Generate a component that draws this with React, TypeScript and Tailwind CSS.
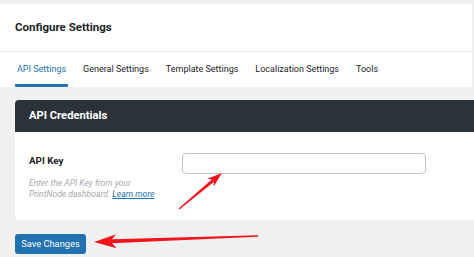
type Pt = [number, number];

// Builds a tapered arrow polygon from tail to tip
function arrowPoints(tail: Pt, tip: Pt, headLen: number, headHalf: number, shaftHalf: number, tailHalf: number) {
  const dx = tip[0] - tail[0];
  const dy = tip[1] - tail[1];
  const len = Math.hypot(dx, dy);
  const ux = dx / len;
  const uy = dy / len;
  const nx = -uy;
  const ny = ux;
  const bx = tip[0] - ux * headLen;
  const by = tip[1] - uy * headLen;
  const wx = bx - ux * headLen * 0.25;
  const wy = by - uy * headLen * 0.25;
  const pts: Pt[] = [
    [tail[0] + nx * tailHalf, tail[1] + ny * tailHalf],
    [bx + nx * shaftHalf, by + ny * shaftHalf],
    [wx + nx * headHalf, wy + ny * headHalf],
    tip,
    [wx - nx * headHalf, wy - ny * headHalf],
    [bx - nx * shaftHalf, by - ny * shaftHalf],
    [tail[0] - nx * tailHalf, tail[1] - ny * tailHalf],
  ];
  return pts.map((p) => `${p[0].toFixed(1)},${p[1].toFixed(1)}`).join(" ");
}

const tabs = ["API Settings", "General Settings", "Template Settings", "Localization Settings", "Tools"];

export default function App() {
  return (
    <div className="relative w-[474px] h-[257px] overflow-hidden bg-[#f0f0f1] pt-[4px] font-['Roboto',sans-serif] text-[#1d2327]">
      {/* Header panel */}
      <div className="mr-[2px] bg-white">
        <div className="flex h-[48px] items-center border-b border-[#e2e4e7] px-[15px]">
          <h1 className="text-[11.5px] font-bold leading-none">Configure Settings</h1>
        </div>
        <div className="flex h-[35px] items-stretch pl-[15px]">
          {tabs.map((t, i) => (
            <div
              key={t}
              className={
                i === 0
                  ? "mr-[13px] flex items-center rounded-b-[1px] border-b-[3px] border-[#2271b1] px-[2px] pt-[3px] text-[9px] text-[#2271b1]"
                  : "mr-[13px] flex items-center border-b-[3px] border-transparent px-[2px] pt-[3px] text-[9px] text-[#1d2327]"
              }
            >
              {t}
            </div>
          ))}
        </div>
      </div>

      {/* Credentials card */}
      <div className="ml-[15px] mt-[13px] w-[470px] overflow-hidden rounded-[4px] bg-white">
        <div className="flex h-[32px] items-center bg-[#2c3338] px-[14px] text-[11.2px] font-bold text-white">
          API Credentials
        </div>
        <div className="flex h-[88px] px-[14px] pt-[23px]">
          <div className="w-[153px]">
            <div className="text-[9.8px] font-bold leading-[12px]">API Key</div>
            <p className="mt-[11px] text-[8.6px] italic leading-[11px] text-[#a7aaad]">
              Enter the API Key from your
              <br />
              PrintNode dashboard.{" "}
              <span className="text-[#2271b1] underline">Learn more</span>
            </p>
          </div>
          <div className="-mt-[2px] h-[21px] w-[244px] rounded-[4px] border border-[#c3c4c7] bg-white" />
        </div>
      </div>

      <button className="ml-[15px] mt-[14px] flex h-[20px] w-[71px] items-center justify-center rounded-[3px] bg-[#2271b1] text-[9.3px] text-white">
        Save Changes
      </button>

      {/* Annotation arrows */}
      <svg className="pointer-events-none absolute left-0 top-0" width="474" height="257">
        <polygon points={arrowPoints([179, 209], [222, 173], 12, 5, 1.6, 0.6)} fill="#f2141c" />
        <polygon points={arrowPoints([258, 236], [94, 242], 18, 7, 2, 0.8)} fill="#f2141c" />
      </svg>
    </div>
  );
}
